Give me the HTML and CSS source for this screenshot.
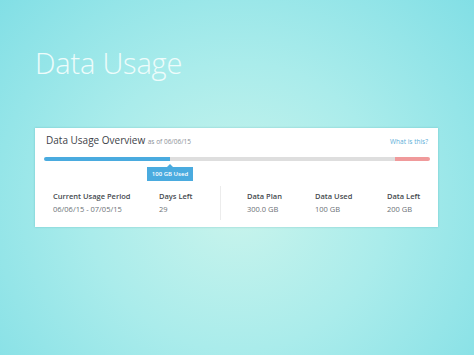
FILE: index.html
```html
<!DOCTYPE html>
<html lang="en">
<head>
    <meta charset="UTF-8">
    <title>Data Usage</title>
    <link rel="stylesheet" href="styles.css">
</head>
<body>
    <h1 class="page-title">Data Usage</h1>
    <div class="card">
        <div class="card-head">
            <div class="card-title">Data Usage Overview <span class="as-of">as of 06/06/15</span></div>
            <a class="help" href="#">What is this?</a>
        </div>
        <div class="bar">
            <div class="bar-used"></div>
            <div class="bar-rest"></div>
            <div class="bar-end"></div>
        </div>
        <div class="tip-row">
            <div class="tip">100 GB Used</div>
        </div>
        <div class="stats">
            <div class="stat stat-period">
                <div class="label">Current Usage Period</div>
                <div class="value">06/06/15 - 07/05/15</div>
            </div>
            <div class="stat stat-days">
                <div class="label">Days Left</div>
                <div class="value">29</div>
            </div>
            <div class="divider"></div>
            <div class="stat stat-plan">
                <div class="label">Data Plan</div>
                <div class="value">300.0 GB</div>
            </div>
            <div class="stat stat-used">
                <div class="label">Data Used</div>
                <div class="value">100 GB</div>
            </div>
            <div class="stat">
                <div class="label">Data Left</div>
                <div class="value">200 GB</div>
            </div>
        </div>
    </div>
</body>
</html>
```
FILE: styles.css
```css
html, body {
    height: 100%;
}
body {
    margin: 0;
    padding: 0 0 0 35px;
    font-family: "Open Sans", sans-serif;
    background: radial-gradient(ellipse 70% 90% at 50% 58%, #c9f4ec 0%, #aaeceb 45%, #7fdee5 100%);
    overflow: hidden;
}
.page-title {
    margin: 0;
    padding-top: 45px;
    height: 128px;
    box-sizing: border-box;
    font-weight: 300;
    font-size: 29px;
    line-height: 36px;
    color: #eefcfb;
    letter-spacing: -0.2px;
}
.card {
    width: 403px;
    height: 99px;
    box-sizing: border-box;
    background: #fff;
    box-shadow: 0 0 2px rgba(40, 140, 150, 0.35);
    padding: 0 8px 0 9px;
}
.card-head {
    display: flex;
    justify-content: space-between;
    align-items: baseline;
    padding: 5px 2px 0 2px;
    height: 25px;
    box-sizing: border-box;
}
.card-title {
    font-size: 10px;
    color: #3d4248;
}
.as-of {
    font-size: 6.5px;
    color: #8b9096;
}
.help {
    font-size: 6.5px;
    color: #5aaed8;
    text-decoration: none;
}
.bar {
    display: flex;
    height: 4px;
    margin-top: 4px;
    border-radius: 2px;
    overflow: hidden;
}
.bar-used {
    width: 126px;
    background: #4aabdf;
}
.bar-rest {
    flex: 1;
    background: #dedede;
}
.bar-end {
    width: 35px;
    background: #f09a9b;
}
.tip-row {
    display: flex;
    padding: 6px 0 0 103px;
}
.tip {
    position: relative;
    width: 46px;
    height: 14px;
    line-height: 14px;
    text-align: center;
    background: #4aabdf;
    color: #fff;
    font-size: 6px;
    font-weight: 600;
}
.tip::before {
    content: "";
    position: absolute;
    top: -3px;
    left: 20px;
    border-left: 3px solid transparent;
    border-right: 3px solid transparent;
    border-bottom: 3px solid #4aabdf;
}
.stats {
    display: flex;
    padding: 10px 0 0 9px;
}
.stat {
    display: flex;
    flex-direction: column;
    gap: 3px;
}
.stat-period {
    width: 106px;
}
.stat-days {
    width: 61px;
}
.stat-plan {
    width: 68px;
}
.stat-used {
    width: 72px;
}
.divider {
    width: 1px;
    height: 34px;
    margin: -5px 26px 0 0;
    background: #ececec;
}
.label {
    font-size: 7.5px;
    font-weight: 600;
    color: #454a4f;
}
.value {
    font-size: 7.5px;
    color: #6b7076;
}
```
